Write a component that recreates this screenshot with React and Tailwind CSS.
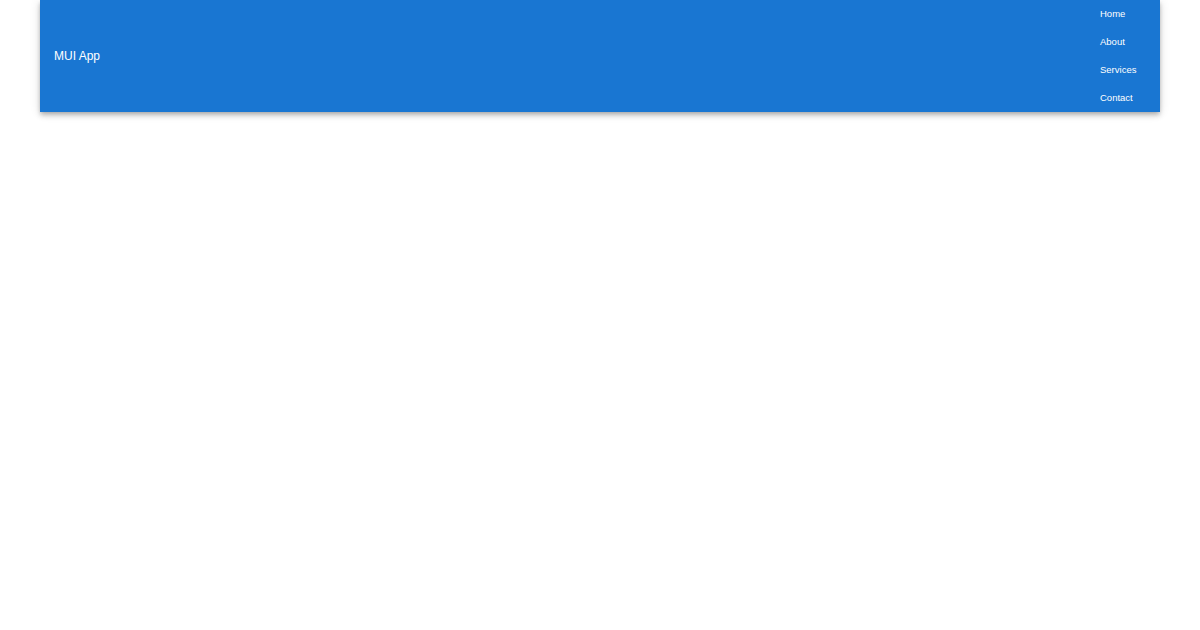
export default function App() {
  return (
    <div className="w-[1200px] h-[630px] bg-white" style={{ fontFamily: '"Liberation Sans", Arial, sans-serif' }}>
      <div className="mx-[40px] bg-[#1976d2] text-white flex items-center justify-between pl-[14px] shadow-[0_2px_4px_-1px_rgba(0,0,0,0.2),0_4px_5px_0_rgba(0,0,0,0.14),0_1px_10px_0_rgba(0,0,0,0.12)]">
        <div className="text-[12px]">MUI App</div>
        <ul className="w-[60px] flex flex-col">
          {['Home', 'About', 'Services', 'Contact'].map((t) => (
            <li key={t} className="h-[28px] flex items-center pt-[1px] text-[9.5px]">{t}</li>
          ))}
        </ul>
      </div>
    </div>
  );
}
